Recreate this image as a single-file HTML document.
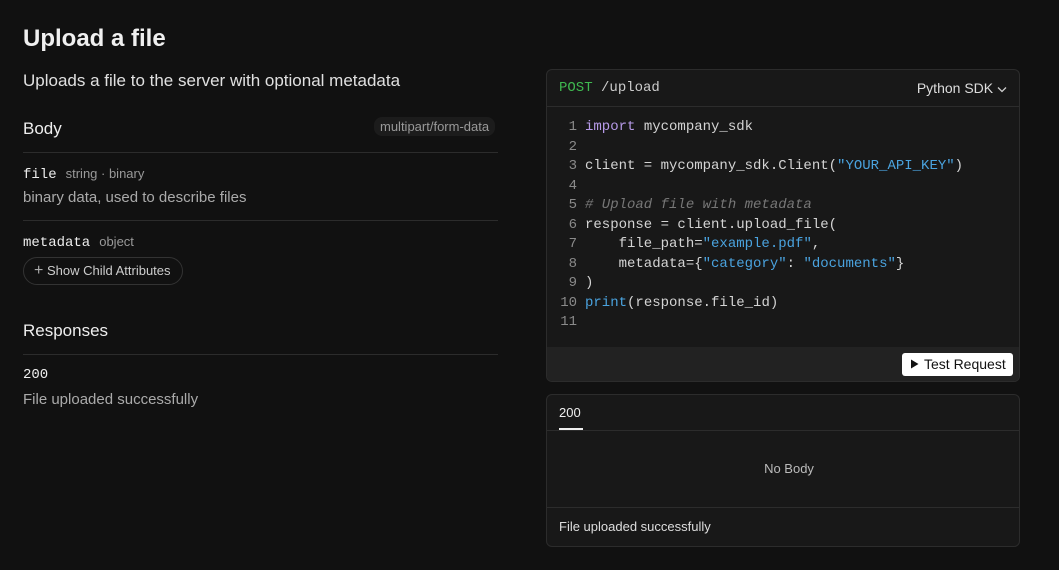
<!DOCTYPE html>
<html><head><style>
*{margin:0;padding:0;box-sizing:border-box}
body{width:1059px;height:570px;background:#111111;font-family:"Liberation Sans",sans-serif;color:#e6e6e6;position:relative;overflow:hidden}
.a{position:absolute;white-space:nowrap}
.m{font-family:"Liberation Mono",monospace}
.hr{position:absolute;left:23px;width:475px;height:1px;background:#2c2c2c}
.card{position:absolute;left:546px;width:474px;border:1px solid #2c2c2c;border-radius:6px;background:#181818;overflow:hidden}
.code{font-family:"Liberation Mono",monospace;font-size:14px;line-height:19.5px;color:#d4d4d4;white-space:pre}
.ln{display:inline-block;width:30px;color:#8a8a8a;text-align:right;margin-right:8px}
.k{color:#b69ae8}.s{color:#4aa3df}.c{color:#777;font-style:italic}
</style></head><body>
<div class="a" style="left:23px;top:25px;font-size:24px;font-weight:bold;color:#f0f0f0">Upload a file</div>
<div class="a" style="left:23px;top:71px;font-size:17px;color:#e0e0e0">Uploads a file to the server with optional metadata</div>
<div class="a" style="left:23px;top:119px;font-size:17px;color:#eee">Body</div>
<div class="a" style="left:374px;top:117px;font-size:13px;color:#999;background:#1c1c1c;border-radius:8px;padding:2px 6px">multipart/form-data</div>
<div class="hr" style="top:152px"></div>
<div class="a" style="left:23px;top:165px;font-size:14px"><span class="m" style="color:#eee">file</span><span style="font-size:13px;color:#999;margin-left:9px">string · binary</span></div>
<div class="a" style="left:23px;top:189px;font-size:15px;color:#aaa">binary data, used to describe files</div>
<div class="hr" style="top:220px"></div>
<div class="a" style="left:23px;top:233px;font-size:14px"><span class="m" style="color:#eee">metadata</span><span style="font-size:13px;color:#999;margin-left:9px">object</span></div>
<div class="a" style="left:23px;top:257px;width:160px;height:28px;border:1px solid #333;border-radius:14px;font-size:13px;color:#ccc;padding:5px 0 0 10px"><span style="font-size:16px;line-height:12px;color:#aaa">+</span> Show Child Attributes</div>
<div class="a" style="left:23px;top:321px;font-size:17px;color:#eee">Responses</div>
<div class="hr" style="top:354px"></div>
<div class="a m" style="left:23px;top:367px;font-size:14px;color:#eee">200</div>
<div class="a" style="left:23px;top:391px;font-size:15px;color:#aaa">File uploaded successfully</div>

<div class="card" style="top:69px;height:313px">
 <div style="height:37px;border-bottom:1px solid #2c2c2c;position:relative">
  <div class="a m" style="left:12px;top:10px;font-size:14px"><span style="color:#3fb950">POST</span> <span style="color:#ccc">/upload</span></div>
  <div class="a" style="right:12px;top:10px;font-size:14px;color:#ddd">Python SDK <svg width="10" height="7" viewBox="0 0 10 7"><path d="M1 1.5l4 4 4-4" fill="none" stroke="#ccc" stroke-width="1.3"/></svg></div>
 </div>
 <div class="code" style="position:absolute;top:48px;left:0"><div><span class="ln">1</span><span class="k">import</span> mycompany_sdk</div><div><span class="ln">2</span></div><div><span class="ln">3</span>client = mycompany_sdk.Client(<span class="s">"YOUR_API_KEY"</span>)</div><div><span class="ln">4</span></div><div><span class="ln">5</span><span class="c"># Upload file with metadata</span></div><div><span class="ln">6</span>response = client.upload_file(</div><div><span class="ln">7</span>    file_path=<span class="s">"example.pdf"</span>,</div><div><span class="ln">8</span>    metadata={<span class="s">"category"</span>: <span class="s">"documents"</span>}</div><div><span class="ln">9</span>)</div><div><span class="ln">10</span><span class="s">print</span>(response.file_id)</div><div><span class="ln">11</span></div></div>
 <div style="position:absolute;left:0;right:0;top:277px;bottom:0;background:#222"></div>
 <div class="a" style="right:6px;top:283px;height:23px;width:111px;background:#fff;border-radius:3px;color:#111;font-size:14px;padding:3px 0 0 8px"><svg width="9" height="10" viewBox="0 0 9 10" style="margin-right:5px"><path d="M1 0.5v9l7.5-4.5z" fill="#111"/></svg>Test Request</div>
</div>

<div class="card" style="top:394px;height:153px">
 <div class="a" style="left:12px;top:10px;font-size:13px;color:#eee">200</div>
 <div class="a" style="left:12px;top:33px;width:24px;height:2px;background:#eee"></div>
 <div style="position:absolute;left:0;right:0;top:35px;height:1px;background:#2c2c2c"></div>
 <div class="a" style="left:0;width:484px;text-align:center;top:66px;font-size:13px;color:#bbb">No Body</div>
 <div style="position:absolute;left:0;right:0;top:112px;height:1px;background:#2c2c2c"></div>
 <div class="a" style="left:12px;top:124px;font-size:13px;color:#ddd">File uploaded successfully</div>
</div>
</body></html>
